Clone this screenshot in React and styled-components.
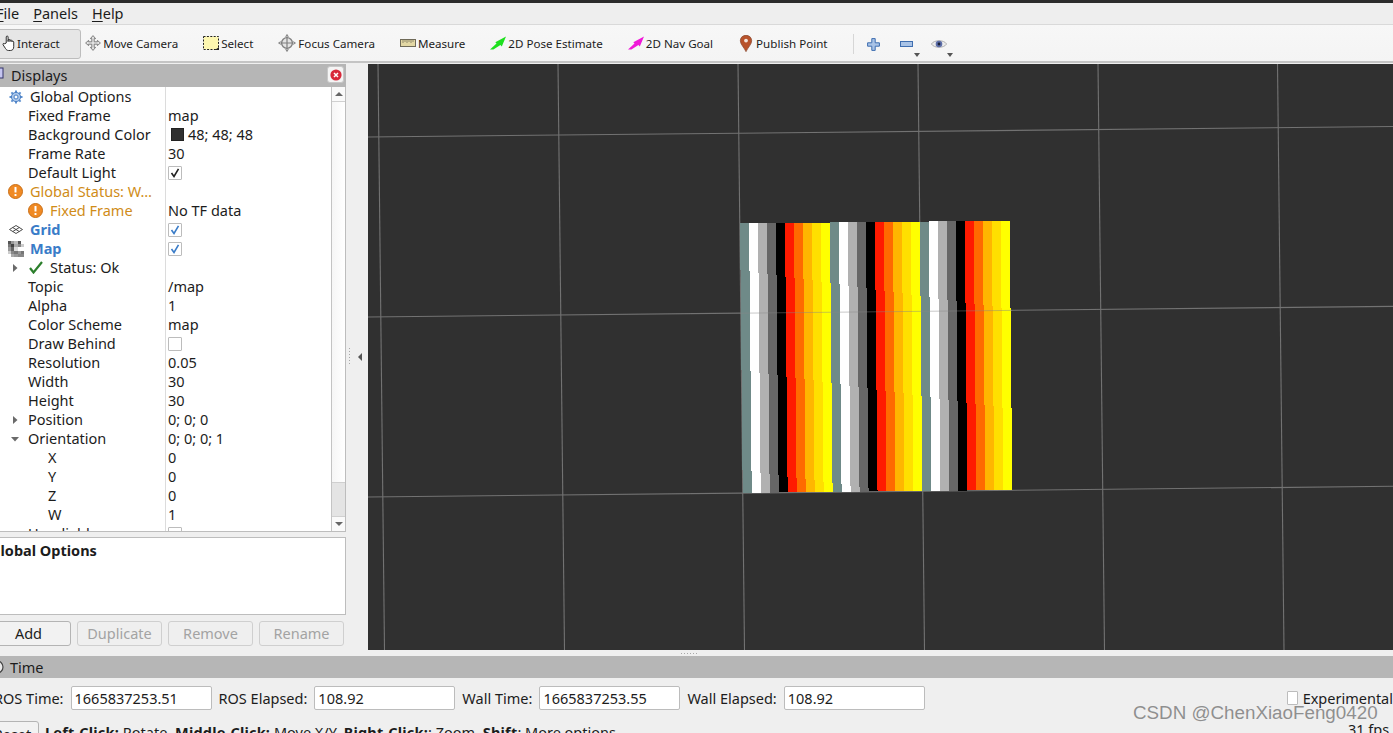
import React from "react";
import styled, { createGlobalStyle } from "styled-components";

const GlobalStyle = createGlobalStyle`
  html, body { margin: 0; padding: 0; overflow: hidden; background: #efefef; }
  * { box-sizing: border-box; }
`;

const Viewport = styled.div`
  position: relative;
  width: 1393px;
  height: 733px;
  overflow: hidden;
  font-family: "Noto Sans", "Open Sans", sans-serif;
  font-size: 14.5px;
  color: #1c1c1c;
  background: #efefef;
`;

// the real window starts a bit left of the shot
const Frame = styled.div`
  width: 1407px;
  margin-left: -14px;
  display: flex;
  flex-direction: column;
`;

const TopEdge = styled.div`
  height: 3px;
  background: #2c2c2c;
`;

const MenuBar = styled.div`
  height: 22px;
  display: flex;
  align-items: center;
  gap: 14px;
  padding: 0 0 2px 10px;
  background: #eeeeee;
  border-bottom: 1px solid #d9d9d9;
`;

const MenuItem = styled.span`
  line-height: 20px;
  u { text-underline-offset: 2px; }
`;

const Toolbar = styled.div`
  height: 38px;
  display: flex;
  align-items: center;
  padding-top: 2px;
  background: linear-gradient(#f7f7f7, #f4f4f4);
  border-bottom: 2px solid #c4c4c4;
  font-size: 11.6px;
`;

const ToolButton = styled.div`
  height: 30px;
  display: flex;
  align-items: center;
  gap: 2px;
  padding: 0 12.5px 2px;
  white-space: nowrap;
`;

const ActiveToolButton = styled(ToolButton)`
  gap: 0;
  padding: 0 20px 2px 15px;
  margin-right: -8px;
  background: #e6e6e6;
  border: 1px solid #bdbdbd;
  border-radius: 3px;
`;

const ToolSeparator = styled.div`
  width: 1px;
  height: 20px;
  margin: 0 13px;
  background: #d6d6d6;
`;

const ViewTool = styled.div`
  position: relative;
  width: ${(p) => p.$w}px;
  height: 30px;
  display: flex;
  align-items: center;
`;

const MenuCaret = styled.span`
  position: absolute;
  right: ${(p) => p.$right}px;
  bottom: 2px;
  width: 0;
  height: 0;
  border: 3px solid transparent;
  border-top: 4px solid #555;
  border-bottom: 0;
`;

const Workspace = styled.div`
  height: 587px;
  display: flex;
`;

const Dock = styled.div`
  width: 360px;
  display: flex;
  flex-direction: column;
  padding-top: 1px;
`;

const DockTitle = styled.div`
  height: 23px;
  flex: none;
  display: flex;
  align-items: center;
  gap: 7px;
  padding: 0 0 2px 3px;
  background: #b6b6b6;
`;

const CloseButton = styled.div`
  margin-left: auto;
  margin-right: 2px;
  width: 17px;
  height: 17px;
  display: flex;
  align-items: center;
  justify-content: center;
  background: #f4f4f4;
  border: 1px solid #c8c8c8;
  border-radius: 3px;
`;

const TreePanel = styled.div`
  height: 445px;
  flex: none;
  display: flex;
  background: #fff;
  border-bottom: 1px solid #bdbdbd;
  border-right: 1px solid #bdbdbd;
`;

const TreeRows = styled.div`
  flex: 1;
  overflow: hidden;
`;

const Row = styled.div`
  height: 19px;
  display: grid;
  grid-template-columns: 179px 1fr;
  line-height: 19px;
`;

const NameCell = styled.div`
  display: flex;
  align-items: center;
  padding-left: ${(p) => p.$pad}px;
  white-space: nowrap;
  font-weight: ${(p) => (p.$link ? 700 : 400)};
  color: ${(p) => (p.$warn ? "#d08c18" : p.$link ? "#3a7cc8" : "inherit")};
`;

const IconSlot = styled.span`
  width: ${(p) => p.$w}px;
  margin-right: ${(p) => p.$gap}px;
  flex: none;
  display: flex;
  align-items: center;
  justify-content: center;
`;

const ValueCell = styled.div`
  display: flex;
  align-items: center;
  gap: 4px;
  padding-left: 2px;
  border-left: 1px solid #dcdcdc;
  white-space: nowrap;
`;

const Check = styled.span`
  width: 14px;
  height: 14px;
  display: flex;
  align-items: center;
  justify-content: center;
  background: #fff;
  border: 1px solid #bcbcbc;
  border-radius: 1px;
`;

const Swatch = styled.span`
  width: 13px;
  height: 13px;
  margin-left: 3px;
  background: #303030;
  border: 1px solid #222;
`;

const ScrollBar = styled.div`
  width: 14px;
  flex: none;
  display: flex;
  flex-direction: column;
  border-left: 1px solid #c4c4c4;
  background: #fafafa;
`;

const ScrollEnd = styled.div`
  height: 15px;
  flex: none;
  display: flex;
  align-items: center;
  justify-content: center;
  border-${(p) => (p.$down ? "top" : "bottom")}: 1px solid #d0d0d0;
  &::after {
    content: "";
    border: 4px solid transparent;
    border-${(p) => (p.$down ? "top" : "bottom")}: 4px solid #666;
    border-${(p) => (p.$down ? "bottom" : "top")}: 0;
  }
`;

const ScrollTrack = styled.div`
  flex: 1;
  display: flex;
  align-items: flex-end;
  background: linear-gradient(90deg, #f6f6f6, #fff);
`;

const ScrollThumb = styled.div`
  width: 100%;
  height: 34px;
  background: #e4e4e4;
  border-top: 1px solid #cfcfcf;
`;

const SplitHandle = styled.div`
  height: 5px;
  flex: none;
`;

const Description = styled.div`
  height: 78px;
  flex: none;
  padding: 2px 0 0 3px;
  background: #fff;
  border: 1px solid #bdbdbd;
  font-weight: 700;
`;

const ButtonRow = styled.div`
  display: flex;
  gap: 6px;
  padding: 6px 2px 0 0;
`;

const PushButton = styled.div`
  flex: 1;
  height: 25px;
  display: flex;
  align-items: center;
  justify-content: center;
  padding-bottom: 2px;
  background: ${(p) => (p.$off ? "#efefef" : "#f2f2f2")};
  border: 1px solid ${(p) => (p.$off ? "#cfcfcf" : "#b4b4b4")};
  border-radius: 3px;
  color: ${(p) => (p.$off ? "#a3a3a3" : "inherit")};
`;

const Collapser = styled.div`
  width: 22px;
  flex: none;
  display: flex;
  align-items: center;
  justify-content: space-between;
  padding: 0 6px 0 3px;
  &::before {
    content: "";
    width: 1px;
    height: 18px;
    background: repeating-linear-gradient(#a8a8a8 0 1px, transparent 1px 3px);
  }
  &::after {
    content: "";
    border: 4px solid transparent;
    border-right: 4px solid #555;
    border-left: 0;
  }
`;

const Scene = styled.div`
  flex: 1;
  height: 586px;
  margin-top: 1px;
  background: #303030;
  overflow: hidden;
  svg { display: block; }
`;

const HandleDots = styled.div`
  height: 6px;
  display: flex;
  justify-content: center;
  align-items: center;
  &::after {
    content: "";
    width: 18px;
    height: 1px;
    background: repeating-linear-gradient(90deg, #a8a8a8 0 1px, transparent 1px 3px);
  }
`;

const TimeTitle = styled.div`
  height: 22px;
  display: flex;
  align-items: center;
  gap: 6px;
  padding-left: 4px;
  background: #b6b6b6;
`;

const TimeRow = styled.div`
  height: 42px;
  display: flex;
  align-items: center;
  padding-bottom: 3px;
`;

const FieldLabel = styled.span`
  margin: 0 7px;
  white-space: nowrap;
`;

const FirstFieldLabel = styled(FieldLabel)`
  margin-left: 8px;
`;

const TimeInput = styled.div`
  width: 141px;
  height: 24px;
  padding-left: 3px;
  line-height: 22px;
  background: #fff;
  border: 1px solid #bcbcbc;
  border-radius: 2px;
`;

const Experimental = styled.div`
  margin-left: auto;
  width: 106px;
  display: flex;
  align-items: center;
  gap: 5px;
  white-space: nowrap;
`;

const HintRow = styled.div`
  display: flex;
  align-items: flex-start;
  height: 30px;
  padding-top: 1px;
`;

const ResetButton = styled.div`
  width: 53px;
  height: 26px;
  margin-right: 6px;
  text-align: center;
  line-height: 24px;
  background: #f2f2f2;
  border: 1px solid #b4b4b4;
  border-radius: 3px;
`;

const HintText = styled.span`
  margin-top: 1px;
  white-space: nowrap;
  b { letter-spacing: 0.2px; }
`;

const Fps = styled.span`
  margin-left: auto;
  margin-top: -2px;
  width: 45px;
  white-space: nowrap;
`;

const Watermark = styled.div`
  position: absolute;
  left: 1133px;
  top: 702px;
  font-size: 18.8px;
  font-family: "Liberation Sans", sans-serif;
  color: #8f8f8f;
  white-space: nowrap;
  text-shadow: 0 0 1px rgba(255, 255, 255, .6);
`;

const HandIcon = () => (
  <svg width="15" height="18" viewBox="0 0 16 18" fill="#fff" stroke="#222" strokeWidth="1" strokeLinejoin="round">
    <path d="M4.5 9V2.6c0-1.4 2-1.4 2 0V7.5V6c0-1.2 2-1.2 2 0v1.500V6.600c0-1.200 2-1.200 2 0v1.200c0-1 2-1 2 .2V13c0 2.400-1.200 4-3.600 4H7c-1.600 0-2.400-.8-3.200-2L1.200 11c-.8-1.300.8-2.200 1.700-1.200z" />
  </svg>
);

const MoveIcon = () => (
  <svg width="16" height="16" viewBox="0 0 16 16" fill="#e2e2e2" stroke="#666" strokeWidth=".8" strokeLinejoin="round">
    <path d="M8 .6l2.600 3H9.200v3.200h3.200V5.400l3 2.600-3 2.600V9.200H9.200v3.200h1.400L8 15.400l-2.600-3h1.400V9.200H3.600v1.400L.6 8l3-2.600v1.400h3.200V3.600H5.400z" />
  </svg>
);

const SelectIcon = () => (
  <svg width="16" height="14" viewBox="0 0 16 14">
    <rect x=".5" y=".5" width="15" height="13" fill="#fdf7b0" stroke="#222" strokeDasharray="2 1.400" />
    <path d="M12 14h4v-3z" fill="#222" />
  </svg>
);

const FocusIcon = () => (
  <svg width="18" height="18" viewBox="0 0 18 18" fill="none" stroke="#808080">
    <circle cx="9" cy="9" r="5.400" fill="#e4e4e4" strokeWidth="1.400" />
    <path d="M9 .5v17M.5 9h17" strokeWidth="1.200" />
    <path d="M7.400 2.600L9 .8l1.600 1.800M7.400 15.400L9 17.200l1.600-1.800M2.600 7.400L.8 9l1.800 1.600M15.400 7.400L17.200 9l-1.800 1.600" strokeWidth=".9" />
  </svg>
);

const RulerIcon = () => (
  <svg width="16" height="8" viewBox="0 0 16 8">
    <rect x=".5" y=".5" width="15" height="7" fill="#e3d8a4" stroke="#6f6a58" />
    <path d="M3 1v3M5 1v2M7 1v3M9 1v2M11 1v3M13 1v2" stroke="#6f6a58" strokeWidth=".7" />
  </svg>
);

const ArrowIcon = ({ color }) => (
  <svg width="16" height="14" viewBox="0 0 16 14">
    <path d="M0 13.400l6.500-6-1.200-1.200L16 .4l-4.200 10.200-1.400-1.500-7 4.400z" fill={color} />
  </svg>
);

const PinIcon = () => (
  <svg width="16" height="17" viewBox="-2 0 16 17">
    <path d="M6 .3C2.600.3.3 2.700.3 5.800c0 3.400 3.600 6.500 5.700 10.900 2.100-4.400 5.700-7.500 5.700-10.900C11.700 2.700 9.400.3 6 .3z" fill="#b8532c" stroke="#7d4026" strokeWidth=".6" />
    <circle cx="6" cy="5.600" r="1.900" fill="#f1e7df" />
  </svg>
);

const PlusIcon = () => (
  <svg width="13" height="13" viewBox="0 0 13 13">
    <path d="M4.800.6h3.400v4.200h4.200v3.400H8.200v4.200H4.800V8.200H.6V4.800h4.200z" fill="#a9c3e6" stroke="#3f6eb0" />
  </svg>
);

const MinusIcon = () => (
  <svg width="13" height="6" viewBox="0 0 13 6">
    <rect x=".5" y=".5" width="12" height="5" fill="#a9c3e6" stroke="#3f6eb0" />
  </svg>
);

const EyeIcon = () => (
  <svg width="16" height="12" viewBox="0 0 16 12">
    <path d="M.4 6C3 1.600 13 1.600 15.600 6 13 10.400 3 10.400.4 6z" fill="#ececec" stroke="#b0b0b0" />
    <circle cx="8" cy="6" r="3.300" fill="#5d6ea8" />
    <circle cx="8" cy="6" r="1.400" fill="#1c2238" />
  </svg>
);

const MonitorIcon = () => (
  <svg width="15" height="15" viewBox="0 0 15 15">
    <rect x="1" y="1" width="13" height="10" fill="#c5c5f0" stroke="#33336a" />
    <path d="M4 13.500h7" stroke="#33336a" strokeWidth="1.400" />
  </svg>
);

const CloseIcon = () => (
  <svg width="12" height="12" viewBox="0 0 12 12">
    <circle cx="6" cy="6" r="5.600" fill="#d8283a" />
    <path d="M4 4l4 4M8 4l-4 4" stroke="#fff" strokeWidth="1.500" />
  </svg>
);

const GearIcon = () => (
  <svg width="14" height="14" viewBox="0 0 14 14">
    <g stroke="#5c8fcf" strokeWidth="2">
      <path d="M7 .5v13M.5 7h13M2.400 2.400l9.200 9.200M11.600 2.400l-9.200 9.200" />
    </g>
    <circle cx="7" cy="7" r="4.600" fill="#a9c6ea" stroke="#4c80c4" />
    <circle cx="7" cy="7" r="2" fill="#fff" stroke="#4c80c4" />
  </svg>
);

const WarnIcon = () => (
  <svg width="15" height="15" viewBox="0 0 15 15">
    <circle cx="7.500" cy="7.500" r="7" fill="#f08a24" stroke="#c96f16" />
    <rect x="6.500" y="3" width="2" height="5.500" rx=".6" fill="#fff" />
    <rect x="6.500" y="10" width="2" height="2" rx=".6" fill="#fff" />
  </svg>
);

const GridIcon = () => (
  <svg width="14" height="9" viewBox="0 0 14 9" fill="none" stroke="#3a3a3a" strokeWidth=".9">
    <path d="M7 .5l6.500 4L7 8.500.5 4.500zM3.700 2.500l6.500 4M10.300 2.500l-6.500 4" />
  </svg>
);

const MAP_CELLS = [
  "#555", "#999", "#bbb", "#555", "#fff",
  "#777", "#444", "#aaa", "#888", "#ccc",
  "#999", "#666", "#ddd", "#fff", "#fff",
  "#ccc", "#888", "#777", "#999", "#777",
  "#fff", "#aaa", "#999", "#888", "#888",
];

const MapIcon = () => (
  <svg width="16" height="16" viewBox="0 0 15 15" shapeRendering="crispEdges">
    {MAP_CELLS.map((c, i) => (
      <rect key={i} x={(i % 5) * 3} y={Math.floor(i / 5) * 3} width="3" height="3" fill={c} />
    ))}
  </svg>
);

const CheckMark = ({ color = "#222" }) => (
  <svg width="10" height="10" viewBox="0 0 10 10" fill="none" stroke={color} strokeWidth="1.600">
    <path d="M1.500 5l2.500 3.500L8.500.8" />
  </svg>
);

const OkIcon = () => (
  <svg width="14" height="13" viewBox="0 0 14 13" fill="none" stroke="#2c7f2c" strokeWidth="2.200">
    <path d="M1 7l3.500 4.500L13 1" />
  </svg>
);

const Arrow = ({ open }) => (
  <svg width="8" height="8" viewBox="0 0 8 8">
    <path d={open ? "M0 2h8L4 6.500z" : "M2 0l4.500 4L2 8z"} fill="#6a6a6a" />
  </svg>
);

const RadioCircle = () => (
  <svg width="14" height="14" viewBox="0 0 14 14">
    <circle cx="7" cy="7" r="6" fill="#e8e8e8" stroke="#444" strokeWidth="1.200" />
  </svg>
);

const STRIPES = ["#6f8a88", "#ffffff", "#b1b1b1", "#666666", "#000000", "#ff1a00", "#ff6a00", "#ffb600", "#ffdf00", "#ffff00"];
const HLINES = [[137, 126.5], [317, 306.4], [497, 486.3]];
const VLINES = [378, 558, 738, 918, 1098, 1277.5];

// the occupancy grid seen slightly skewed, drawn without antialias so the stair steps show
const stripePoints = (i) => {
  const left = 740 + i * 9;
  const top = 223.3 - (i * 2.6) / 30;
  const bottom = 492.8 - (i * 2.8) / 30;
  const pts = [[left, top], [left + 9, top]];
  const down = [];
  [0, 1, 2].forEach((k) => {
    const y = 270 + i * 1.3 + k * 100;
    if (y < bottom) {
      pts.push([left + 9 + k, y], [left + 10 + k, y]);
      down.unshift([left + k + 1, y], [left + k, y]);
    }
  });
  const last = pts[pts.length - 1][0];
  pts.push([last, bottom], [last - 9, bottom]);
  return [...pts, ...down].map((p) => p.join(",")).join(" ");
};

const SceneDrawing = () => (
  <svg width="1025" height="586" viewBox="368 64 1025 586">
    {VLINES.map((x) => (
      <line key={x} x1={x} y1="64" x2={x + 6.5} y2="650" stroke="#727272" strokeWidth="1.100" />
    ))}
    {HLINES.map(([a, b]) => (
      <line key={a} x1="368" y1={a} x2="1393" y2={b} stroke="#727272" strokeWidth="1.100" />
    ))}
    <g shapeRendering="crispEdges">
      {Array.from({ length: 30 }, (_, i) => (
        <polygon key={i} points={stripePoints(i)} fill={STRIPES[i % 10]} />
      ))}
    </g>
    <line x1="740" y1="313.200" x2="1012" y2="310.400" stroke="#888" strokeWidth="1" opacity=".45" />
  </svg>
);

const ROWS = [
  { name: "Global Options", pad: 23, icon: <GearIcon />, w: 14, gap: 7 },
  { name: "Fixed Frame", pad: 42, value: "map" },
  { name: "Background Color", pad: 42, value: "48; 48; 48", swatch: true },
  { name: "Frame Rate", pad: 42, value: "30" },
  { name: "Default Light", pad: 42, check: "#222" },
  { name: "Global Status: W…", pad: 22, icon: <WarnIcon />, w: 15, gap: 7, warn: true },
  { name: "Fixed Frame", pad: 42, value: "No TF data", icon: <WarnIcon />, w: 15, gap: 7, warn: true },
  { name: "Grid", pad: 23, icon: <GridIcon />, w: 14, gap: 7, link: true, check: "#3a7cc8" },
  { name: "Map", pad: 22, icon: <MapIcon />, w: 16, gap: 6, link: true, check: "#3a7cc8" },
  { name: "Status: Ok", pad: 25, arrow: "closed", icon: <OkIcon />, w: 14, gap: 7 },
  { name: "Topic", pad: 42, value: "/map" },
  { name: "Alpha", pad: 42, value: "1" },
  { name: "Color Scheme", pad: 42, value: "map" },
  { name: "Draw Behind", pad: 42, check: "none" },
  { name: "Resolution", pad: 42, value: "0.05" },
  { name: "Width", pad: 42, value: "30" },
  { name: "Height", pad: 42, value: "30" },
  { name: "Position", pad: 25, value: "0; 0; 0", arrow: "closed" },
  { name: "Orientation", pad: 25, value: "0; 0; 0; 1", arrow: "open" },
  { name: "X", pad: 62, value: "0" },
  { name: "Y", pad: 62, value: "0" },
  { name: "Z", pad: 62, value: "0" },
  { name: "W", pad: 62, value: "1" },
  { name: "Unreliable", pad: 42, check: "none" },
];

const TOOLS = [
  { icon: <MoveIcon />, label: "Move Camera" },
  { icon: <SelectIcon />, label: "Select" },
  { icon: <FocusIcon />, label: "Focus Camera" },
  { icon: <RulerIcon />, label: "Measure" },
  { icon: <ArrowIcon color="#1fe01f" />, label: "2D Pose Estimate" },
  { icon: <ArrowIcon color="#f018d8" />, label: "2D Nav Goal" },
  { icon: <PinIcon />, label: "Publish Point" },
];

const TreeRow = ({ r }) => (
  <Row>
    <NameCell $pad={r.pad} $warn={r.warn} $link={r.link}>
      {r.arrow && (
        <IconSlot $w={8} $gap={r.icon ? 10 : 9}>
          <Arrow open={r.arrow === "open"} />
        </IconSlot>
      )}
      {r.icon && <IconSlot $w={r.w} $gap={r.gap}>{r.icon}</IconSlot>}
      {r.name}
    </NameCell>
    <ValueCell>
      {r.swatch && <Swatch />}
      {r.check && <Check>{r.check !== "none" && <CheckMark color={r.check} />}</Check>}
      {r.value}
    </ValueCell>
  </Row>
);

export default function App() {
  return (
    <Viewport>
      <GlobalStyle />
      <Frame>
        <TopEdge />
        <MenuBar>
          <MenuItem><u>F</u>ile</MenuItem>
          <MenuItem><u>P</u>anels</MenuItem>
          <MenuItem><u>H</u>elp</MenuItem>
        </MenuBar>
        <Toolbar>
          <ActiveToolButton>
            <HandIcon />
            Interact
          </ActiveToolButton>
          {TOOLS.map((t) => (
            <ToolButton key={t.label}>
              {t.icon}
              {t.label}
            </ToolButton>
          ))}
          <ToolSeparator />
          <ViewTool $w={33}><PlusIcon /></ViewTool>
          <ViewTool $w={31}><MinusIcon /><MenuCaret $right={11} /></ViewTool>
          <ViewTool $w={23}><EyeIcon /><MenuCaret $right={1} /></ViewTool>
        </Toolbar>
        <Workspace>
          <Dock>
            <DockTitle>
              <MonitorIcon />
              Displays
              <CloseButton><CloseIcon /></CloseButton>
            </DockTitle>
            <TreePanel>
              <TreeRows>
                {ROWS.map((r, i) => <TreeRow key={i} r={r} />)}
              </TreeRows>
              <ScrollBar>
                <ScrollEnd />
                <ScrollTrack><ScrollThumb /></ScrollTrack>
                <ScrollEnd $down />
              </ScrollBar>
            </TreePanel>
            <SplitHandle />
            <Description>Global Options</Description>
            <ButtonRow>
              <PushButton>Add</PushButton>
              <PushButton $off>Duplicate</PushButton>
              <PushButton $off>Remove</PushButton>
              <PushButton $off>Rename</PushButton>
            </ButtonRow>
          </Dock>
          <Collapser />
          <Scene><SceneDrawing /></Scene>
        </Workspace>
        <HandleDots />
        <TimeTitle>
          <RadioCircle />
          Time
        </TimeTitle>
        <TimeRow>
          <FirstFieldLabel>ROS Time:</FirstFieldLabel>
          <TimeInput>1665837253.51</TimeInput>
          <FieldLabel>ROS Elapsed:</FieldLabel>
          <TimeInput>108.92</TimeInput>
          <FieldLabel>Wall Time:</FieldLabel>
          <TimeInput>1665837253.55</TimeInput>
          <FieldLabel>Wall Elapsed:</FieldLabel>
          <TimeInput>108.92</TimeInput>
          <Experimental><Check />Experimental</Experimental>
        </TimeRow>
        <HintRow>
          <ResetButton>Reset</ResetButton>
          <HintText>
            <b>Left-Click:</b> Rotate. <b>Middle-Click:</b> Move X/Y. <b>Right-Click:</b>: Zoom. <b>Shift</b>: More options.
          </HintText>
          <Fps>31 fps</Fps>
        </HintRow>
      </Frame>
      <Watermark>CSDN @ChenXiaoFeng0420</Watermark>
    </Viewport>
  );
}
